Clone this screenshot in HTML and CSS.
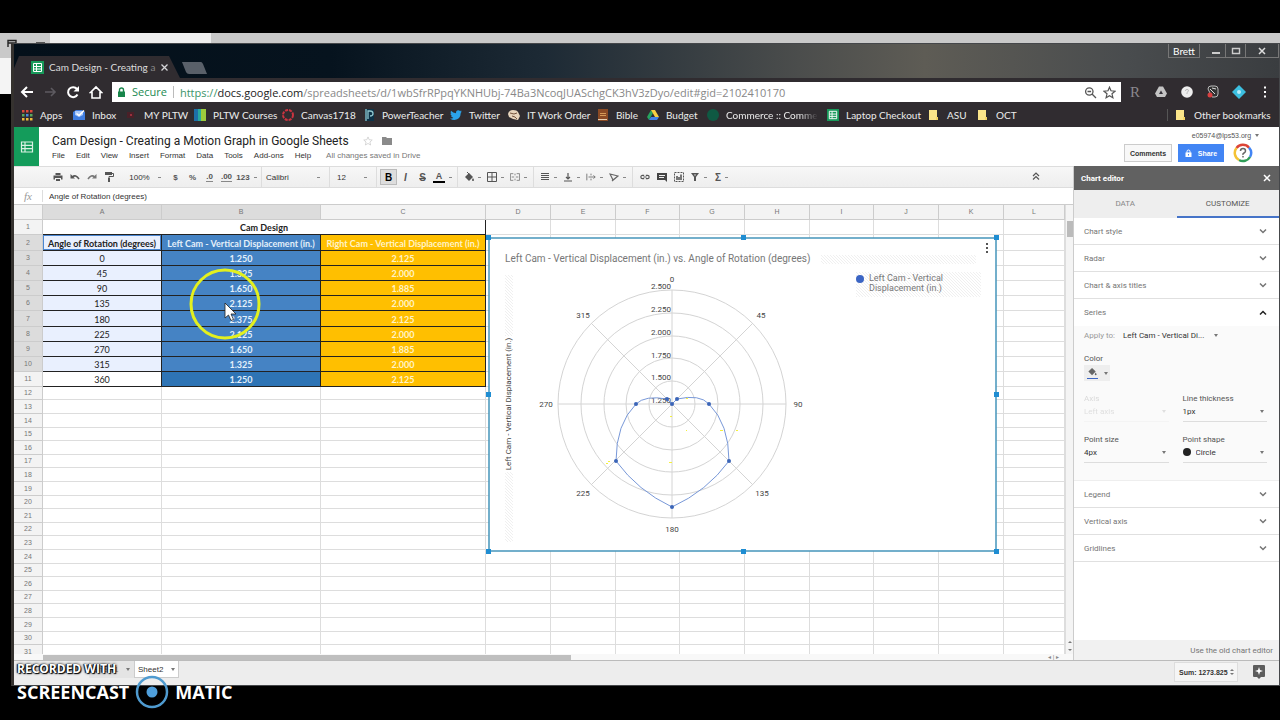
FILE: index.html
```html
<!DOCTYPE html>
<html lang="en">
<head>
<meta charset="utf-8">
<title>Cam Design - Creating a Motion Graph in Google Sheets</title>
<link rel="stylesheet" href="styles.css">
</head>
<body>
<svg class="defs" width="0" height="0" aria-hidden="true">
  <symbol id="sheet" viewBox="0 0 13 13"><path fill="#17995a" d="M0 0h13v13H0z"/><path fill="none" stroke="#fff" d="M2.5 2.5h8v8h-8zM2.5 5.5h8M2.5 8h8M5.5 2.5v8"/></symbol>
  <symbol id="folder" viewBox="0 0 12 12"><path fill="#fbe58a" d="M1 1h8v10H1z"/><path fill="#f5d564" d="M8 8h2v3H8z"/></symbol>
  <symbol id="chev" viewBox="0 0 8 8"><path fill="none" stroke="currentColor" stroke-width="1.5" d="M1 2.5l3 3 3-3"/></symbol>
</svg>

<div class="desktop">
  <div class="back-window">
    <svg width="50" height="14" viewBox="0 0 50 14"><path fill="none" stroke="#222" stroke-width="1.400" d="M8 7.500h8V15H8zM8 10h8"/><path fill="#555" d="M36 9h9v2h-9z"/></svg>
    <span class="back-tab"></span>
  </div>

  <div class="window">
    <header class="titlebar">
      <div class="tab">
        <svg class="i13"><use href="#sheet"/></svg>
        <span class="tab-title">Cam Design - Creating <span class="dim">a</span></span>
        <button class="bare" aria-label="Close tab"><svg width="9" height="9" viewBox="0 0 9 9"><path stroke="#d5d5d8" stroke-width="1.3" d="M1.5 1.5l6 6m0-6l-6 6"/></svg></button>
      </div>
      <svg class="newtab" width="27" height="13" viewBox="0 0 27 13"><path fill="#596069" d="M2 1h19q1 0 2 2l4 10H9q-2 0-3-2z"/></svg>
      <div class="controls">
        <button class="user">Brett</button>
        <button class="winbtn" aria-label="Minimize"><svg width="10" height="10" viewBox="0 0 10 10"><path fill="#ccc" d="M1 6h8v2H1z"/></svg></button>
        <button class="winbtn" aria-label="Maximize"><svg width="10" height="10" viewBox="0 0 10 10"><path fill="none" stroke="#ccc" stroke-width="1.4" d="M1.5 2.5h7v5h-7z"/></svg></button>
        <button class="winbtn wide" aria-label="Close"><svg width="10" height="10" viewBox="0 0 10 10"><path stroke="#ddd" stroke-width="1.5" d="M2 2l6 6m0-6L2 8"/></svg></button>
      </div>
    </header>

    <nav class="navbar">
      <button class="bare" aria-label="Back"><svg width="14" height="14" viewBox="0 0 14 14"><path fill="none" stroke="#fff" stroke-width="2" d="M13 7H2.500M7 2L2 7l5 5"/></svg></button>
      <button class="bare" aria-label="Forward"><svg width="14" height="14" viewBox="0 0 14 14"><path fill="none" stroke="#5d5a60" stroke-width="1.600" d="M2 7h10M8 3l4 4-4 4"/></svg></button>
      <button class="bare" aria-label="Reload"><svg width="14" height="14" viewBox="0 0 14 14"><path fill="none" stroke="#fff" stroke-width="2" d="M11.500 9.500A5 5 0 1 1 11 4"/><path fill="#fff" d="M13 1v5.500H7.500z"/></svg></button>
      <button class="bare" aria-label="Home"><svg width="14" height="14" viewBox="0 0 14 14"><path fill="none" stroke="#fff" stroke-width="1.600" d="M1.500 7.500L7 2l5.500 5.500H11V13H3V7.500z"/></svg></button>
      <div class="omnibox">
        <svg width="9" height="11" viewBox="0 0 9 11"><path fill="#17854a" d="M1 4.500h7V10H1z"/><path fill="none" stroke="#17854a" stroke-width="1.400" d="M2.500 5V3a2 2 0 0 1 4 0v2"/></svg>
        <span class="secure">Secure</span>
        <span class="url"><span class="scheme">https://</span><span class="host">docs.google.com</span>/spreadsheets/d/1wbSfrRPpqYKNHUbj-74Ba3NcoqJUASchgCK3hV3zDyo/edit#gid=2102410170</span>
        <svg width="13" height="13" viewBox="0 0 13 13"><path fill="none" stroke="#555" stroke-width="1.300" d="M9 5.500a3.700 3.700 0 1 1-7.400 0 3.700 3.700 0 0 1 7.400 0zM8 8l4 4M3.500 5.500h3.600"/></svg>
        <svg width="13" height="13" viewBox="0 0 13 13"><path fill="none" stroke="#555" stroke-width="1.200" d="M6.500 1.200L8 4.800l4 .4-3 2.600.9 3.900-3.400-2-3.400 2L4 7.800 1 5.200l4-.4z"/></svg>
      </div>
      <div class="extensions">
        <span class="ext-r">R</span>
        <svg width="14" height="14" viewBox="0 0 14 14"><path fill="#c4c4c4" d="M5 1.500h4l4 7-2 3.500H3L1 8.500z"/><path fill="#35323a" d="M7 5.500L9 9H5z"/></svg>
        <svg width="14" height="14" viewBox="0 0 14 14"><circle cx="7" cy="7" r="5.800" fill="#eee"/><path fill="none" stroke="#bbb" d="M5.500 6q0-1.700 1.500-1.700T8.500 6Q8 6.800 7 7.500V9"/></svg>
        <svg width="14" height="14" viewBox="0 0 14 14"><path fill="#333" stroke="#bbb" d="M2 4q0-3 3-3h4q3 0 3 3v5q0 3-3 3H6z"/><path stroke="#ddd" d="M4 4l5 5M6 3l4 1"/><circle cx="4" cy="10" r="2.500" fill="#d94040"/></svg>
        <svg width="14" height="14" viewBox="0 0 14 14"><path fill="#3cbfe0" d="M7 0l7 7-7 7-7-7z"/><circle cx="7" cy="7" r="2" fill="#b9edf8"/></svg>
        <svg width="14" height="14" viewBox="0 0 14 14"><path fill="#fff" d="M6 1.500h2v2H6zm0 4.500h2v2H6zm0 4.500h2v2H6z"/></svg>
      </div>
    </nav>

    <nav class="bookmarks">
      <a href="#"><svg class="i12" viewBox="0 0 12 12"><path fill="#e04a3c" d="M1 1h2.500v2.500H1zm4 0h2.500v2.500H5zm4 0h2.500v2.500H9z"/><path fill="#58a85f" d="M1 5h2.500v2.500H1zM9 5h2.500v2.500H9z"/><path fill="#4a88e0" d="M5 5h2.500v2.500H5z"/><path fill="#edbb3c" d="M1 9h2.500v2.500H1zm4 0h2.500v2.500H5zm4 0h2.500v2.500H9z"/></svg>Apps</a>
      <a href="#"><svg class="i12" viewBox="0 0 12 12"><path fill="#3f7de0" d="M0 3l3-2h6l3 2v8H0z"/><path fill="#a8c8fa" d="M2 2h8v4L6 8 2 6z"/><path fill="none" stroke="#fff" stroke-width="1.500" d="M3.500 4.500L6 6.500l5-5"/></svg>Inbox</a>
      <a href="#"><svg class="i12" viewBox="0 0 12 12"><path fill="#4a2028" d="M2 3h7v6H2z"/><path fill="#98303c" d="M5 5h2v2H5z"/></svg>MY PLTW</a>
      <a href="#"><svg class="i12" viewBox="0 0 12 12"><path fill="#1d6fa8" d="M0 0h4v12H0z"/><path fill="#28a8a0" d="M4 0h3v12H4z"/><path fill="#9ccb3c" d="M7 0h5v12H7z"/></svg>PLTW Courses</a>
      <a href="#"><svg class="i12" viewBox="0 0 12 12"><circle cx="6" cy="6" r="5" fill="none" stroke="#cc3440" stroke-width="2" stroke-dasharray="3 1"/></svg>Canvas1718</a>
      <a href="#"><svg class="i12" viewBox="0 0 12 12"><path fill="#0d3348" d="M2 0h9v12H2z"/><path fill="none" stroke="#8fc5cc" stroke-width="1.300" d="M3 0v12M5 10V2h2q3 0 3 2.500T7 7"/></svg>PowerTeacher</a>
      <a href="#"><svg class="i12" viewBox="0 0 12 12"><path fill="#2ba3ea" d="M0 9.500q2 .3 3.300-.8Q1.500 8.300 1 7h1Q.5 6.300.4 4.500l1 .3Q0 3.500 1 1.700 3 4 6 4.200 5.800 1.300 8.300 1.200q1 0 1.700.8l1.500-.6-.9 1.400L12 2.500l-1.200 1.300Q10.500 10.500 4.500 11 2 11 0 9.500z"/></svg>Twitter</a>
      <a href="#"><svg class="i12" viewBox="0 0 12 12"><path fill="#e8d5bd" d="M0 5q1-4 5-4t5 2l2 4-2 4-5-1-4-2z"/><path fill="none" stroke="#76543e" d="M2 4l4 1 3-1M4 7l3 1 2 2"/></svg>IT Work Order</a>
      <a href="#"><svg class="i12" viewBox="0 0 12 12"><path fill="#8b4a24" d="M1 0h10v12H1z"/><path fill="#e6cfb0" d="M1 10h9v1H1z"/><path stroke="#d49a58" d="M3 4.500h6M3 6.500h6"/></svg>Bible</a>
      <a href="#"><svg class="i12" viewBox="0 0 12 12"><path fill="#27a35e" d="M4 1L0 8l2 3 4-7z"/><path fill="#f7cf43" d="M4 1h4l4 7H8z"/><path fill="#4080e8" d="M4 8h8l-2 3H2z"/></svg>Budget</a>
      <a href="#"><svg class="i12" viewBox="0 0 12 12"><circle cx="6" cy="6" r="6" fill="#0f5943"/></svg><span class="fade">Commerce :: Comme</span></a>
      <a href="#"><svg class="i12"><use href="#sheet"/></svg>Laptop Checkout</a>
      <a href="#"><svg class="i12"><use href="#folder"/></svg>ASU</a>
      <a href="#"><svg class="i12"><use href="#folder"/></svg>OCT</a>
      <a href="#" class="other"><svg class="i12"><use href="#folder"/></svg>Other bookmarks</a>
    </nav>

    <div class="doc-header">
      <a class="home" href="#" aria-label="Sheets home"><svg width="14" height="14" viewBox="0 0 14 14"><path fill="none" stroke="#d8f0e2" stroke-width="1.200" d="M1.500 2h11v10h-11zM1.500 5.300h11M1.500 8.600h11M5 2v10"/></svg></a>
      <div class="doc-info">
        <div class="doc-title">
          <h1>Cam Design - Creating a Motion Graph in Google Sheets</h1>
          <svg width="10" height="10" viewBox="0 0 13 13"><path fill="none" stroke="#ccc" d="M6.500 1.200L8 4.800l4 .4-3 2.600.9 3.900-3.400-2-3.400 2L4 7.800 1 5.200l4-.4z"/></svg>
          <svg width="12" height="10" viewBox="0 0 12 10"><path fill="#8a8a8a" d="M1 1h4l1 1h5v7H1z"/></svg>
        </div>
        <div class="menus">
          <button>File</button><button>Edit</button><button>View</button><button>Insert</button><button>Format</button><button>Data</button><button>Tools</button><button>Add-ons</button><button>Help</button><span>All changes saved in Drive</span>
        </div>
      </div>
      <div class="account">
        <div class="email">e05974@lps53.org <i class="caret"></i></div>
        <div class="actions">
          <button class="comments">Comments</button>
          <button class="share"><svg width="7" height="9" viewBox="0 0 7 9"><path fill="#fff" d="M.5 3.500h6V8h-6z"/><path fill="none" stroke="#fff" d="M2 4V2.500a1.500 1.500 0 0 1 3 0V4"/><path fill="#4285f4" d="M3 5h1v1.500H3z"/></svg>Share</button>
          <button class="bare help" aria-label="Help"><svg width="20" height="20" viewBox="0 0 20 20"><g fill="none" stroke-width="2.500"><path stroke="#dc4437" d="M3.500 5A8 8 0 0 1 16 4.700"/><path stroke="#4285f4" d="M16 4.700A8 8 0 0 1 17 14"/><path stroke="#2f9e58" d="M17 14a8 8 0 0 1-11 3"/><path stroke="#f4c234" d="M6 17A8 8 0 0 1 3.500 5"/></g><path fill="none" stroke="#666" stroke-width="1.500" d="M7.500 8q0-2.500 2.500-2.500T12.500 8q0 1.200-1.500 2t-1 2M10 13v1.500"/></svg></button>
        </div>
      </div>
    </div>

    <div class="workspace">
      <main class="left">
        <div class="toolbar" role="toolbar">
          <div class="group lead">
            <button aria-label="Print"><svg viewBox="0 0 10 10"><path fill="#555" d="M2.500 1h5v2h-5zM.5 3.500h9v4H8V6H2v1.500H.5zM3 7h4v2H3z"/></svg></button>
            <button aria-label="Undo"><svg viewBox="0 0 10 10"><path fill="none" stroke="#555" stroke-width="1.500" d="M2 5q4-3 7 2"/><path fill="#555" d="M.5 2v4.500H5z"/></svg></button>
            <button aria-label="Redo"><svg viewBox="0 0 10 10"><path fill="none" stroke="#777" stroke-width="1.500" d="M8 5Q4 2 1 7"/><path fill="#777" d="M9.500 2v4.500H5z"/></svg></button>
            <button aria-label="Paint format"><svg viewBox="0 0 10 10"><path fill="#555" d="M1 0h7v3H1z"/><path fill="none" stroke="#555" d="M8 1.500h1.500v3H5V6"/><path fill="#555" d="M4 6h2v4H4z"/></svg></button>
          </div>
          <div class="group">
            <button class="zoom">100%<i class="dash"></i></button>
            <button>$</button><button>%</button>
            <button aria-label="Decrease decimals"><span class="dec">.0</span></button><button aria-label="Increase decimals"><span class="dec">.00</span></button><button class="drop">123<i class="dash"></i></button>
          </div>
          <div class="group"><button class="font">Calibri<i class="dash"></i></button></div>
          <div class="group"><button class="size">12<i class="dash"></i></button></div>
          <div class="group">
            <button class="on"><b>B</b></button><button><em>I</em></button><button><s>S</s></button><button class="drop"><u>A</u><i class="dash"></i></button>
          </div>
          <div class="group">
            <button class="drop" aria-label="Fill color"><svg viewBox="0 0 10 10"><path fill="#555" d="M1 5l4-4 4 4-4 4zM9 6q2 3 0 3t0-3z"/><path stroke="#555" d="M3 0l3 3"/></svg><i class="dash"></i></button>
            <button class="drop" aria-label="Borders"><svg viewBox="0 0 10 10"><path fill="none" stroke="#555" d="M.5.5h9v9h-9zM5 .500v9M.5 5h9"/></svg><i class="dash"></i></button>
            <button class="drop" aria-label="Merge"><svg viewBox="0 0 12 10"><path fill="none" stroke="#777" d="M4 1H.500v8H4M8 1h3.500v8H8M2 5h3M10 5H7M6 1v2m0 4v2"/></svg><i class="dash"></i></button>
          </div>
          <div class="group">
            <button class="drop" aria-label="Align"><svg viewBox="0 0 10 10"><path stroke="#555" d="M1 1.500h8M1 3.500h8M1 5.500h8M1 7.500h8"/></svg><i class="dash"></i></button>
            <button class="drop" aria-label="Vertical align"><svg viewBox="0 0 10 10"><path fill="none" stroke="#555" stroke-width="1.200" d="M1 9h8M5 1v6M3 5l2 2 2-2"/></svg><i class="dash"></i></button>
            <button class="drop" aria-label="Wrap"><svg viewBox="0 0 12 10"><path fill="none" stroke="#666" d="M1 1v8M3 5h8M9 3l2 2-2 2M6 1v2m0 4v2"/></svg><i class="dash"></i></button>
            <button class="drop" aria-label="Rotate"><svg viewBox="0 0 10 10"><path fill="none" stroke="#666" stroke-width="1.200" d="M1 2l8 2-5 4zM3 9l6-5"/></svg><i class="dash"></i></button>
          </div>
          <div class="group last">
            <button aria-label="Link"><svg viewBox="0 0 12 10"><path fill="none" stroke="#555" stroke-width="1.400" d="M5 3H3a2 2 0 0 0 0 4h2M7 3h2a2 2 0 0 1 0 4H7M4 5h4"/></svg></button>
            <button aria-label="Comment"><svg viewBox="0 0 10 10"><path fill="#444" d="M0 1h10v9L8 8H0z"/><path stroke="#eee" d="M2 3.500h6M2 5.500h5"/></svg></button>
            <button aria-label="Chart"><svg viewBox="0 0 10 10"><path fill="none" stroke="#555" stroke-dasharray="2 1" d="M.5.5h9v9h-9z"/><path stroke="#444" stroke-width="1.400" d="M3 8V4m2 4V5m2 3V2.500"/></svg></button>
            <button class="drop" aria-label="Filter"><svg viewBox="0 0 10 10"><path fill="#555" d="M1 1h8L6 5v4H4V5z"/><path fill="#eee" d="M4 2.500h2L5 4z"/></svg><i class="dash"></i></button>
            <button class="drop"><b>Σ</b><i class="dash"></i></button>
          </div>
          <button class="collapse" aria-label="Collapse"><svg viewBox="0 0 10 10"><path fill="none" stroke="#555" stroke-width="1.200" d="M2 5l3-3 3 3M2 8.500l3-3 3 3"/></svg></button>
        </div>
        <label class="formula"><span class="fx">fx</span><input type="text" value="Angle of Rotation (degrees)" aria-label="Formula"></label>
        <div class="grid-area">
          <div class="grid-view">
            <table class="sheet">
              <colgroup><col class="c-num"><col class="c-a"><col class="c-b"><col class="c-c"><col class="c-n"><col class="c-n"><col class="c-s"><col class="c-n"><col class="c-n"><col class="c-s"><col class="c-n"><col class="c-n"><col></colgroup>
              <thead><tr></tr></thead>
              <tbody></tbody>
            </table>
            <svg class="chart" width="513" height="319" viewBox="-3 -3 513 319" role="img" aria-label="Radar chart">
              <defs><pattern id="hatch" width="3" height="3" patternUnits="userSpaceOnUse"><path stroke="#e6e6e6" stroke-width=".6" d="M0 0l3 3"/></pattern></defs>
              <rect class="frame" x="0" y="0" width="507" height="313"/>
              <path fill="url(#hatch)" d="M16 37h8v61h-8zM16 234h8v70h-8zM332 17h155v9H332zM367 34h125v25H367z"/>
              <text class="title" x="16" y="24">Left Cam - Vertical Displacement (in.) vs. Angle of Rotation (degrees)</text>
              <g class="rings"><circle cx="183" cy="166" r="23"/><circle cx="183" cy="166" r="46"/><circle cx="183" cy="166" r="68"/><circle cx="183" cy="166" r="91"/><circle cx="183" cy="166" r="114"/><path d="M183 52v228M69 166h228M102 85l162 162M264 85L102 247"/></g>
              <g class="labels mid"><text x="183" y="44">0</text><text x="272" y="80">45</text><text x="309" y="169">90</text><text x="273" y="258">135</text><text x="183" y="294">180</text><text x="94" y="258">225</text><text x="57" y="169">270</text><text x="94" y="80">315</text></g>
              <g class="labels end"><text x="182" y="51">2.500</text><text x="182" y="74">2.250</text><text x="182" y="97">2.000</text><text x="182" y="120">1.750</text><text x="182" y="142">1.500</text><text x="182" y="165">1.250</text></g>
              <path class="series" d="M183 166L188 161Q211 156 220 166Q240 186 240 223Q218 253 183 269Q149 253 127 223Q127 186 147 166Q156 157 178 161Z"/>
              <g class="dots"><circle cx="183" cy="166" r="2"/><circle cx="188" cy="161" r="2"/><circle cx="220" cy="166" r="2"/><circle cx="240" cy="223" r="2"/><circle cx="183" cy="269" r="2"/><circle cx="127" cy="223" r="2"/><circle cx="147" cy="166" r="2"/><circle cx="178" cy="161" r="2"/></g>
              <path fill="#f4f03c" d="M197 160h2v1h-2zM181 178h2v1h-2zM197 192h1v1h-1zM231 192h3v1h-3zM247 192h2v1h-2zM180 224h3v1h-3zM117 225h2v1h-2zM119 223h2v1h-2z"/>
              <text class="axis" transform="translate(22 166) rotate(-90)">Left Cam - Vertical Displacement (in.)</text>
              <circle cx="371" cy="41" r="4" fill="#3b65c4"/>
              <g class="legend"><text x="380" y="43">Left Cam - Vertical</text><text x="380" y="53">Displacement (in.)</text></g>
              <path fill="#555" d="M497 5h2v2h-2zm0 4h2v2h-2zm0 4h2v2h-2z"/>
              <path class="handles" d="M-3-3h5v5h-5zM252-3h5v5h-5zM505-3h5v5h-5zM-3 154h5v5h-5zM505 154h5v5h-5zM-3 311h5v5h-5zM252 311h5v5h-5zM505 311h5v5h-5z"/>
            </svg>
          </div>
          <div class="vscroll"><span class="vthumb"></span><i class="arr up"></i><i class="arr"></i></div>
        </div>
        <div class="hscroll"><span class="hthumb"></span><span class="harr">◂ | ▸</span></div>
      </main>

      <aside class="editor">
        <div class="ed-head"><h2>Chart editor</h2><button class="bare" aria-label="Close"><svg width="8" height="8" viewBox="0 0 8 8"><path stroke="#fff" stroke-width="1.500" d="M1 1l6 6m0-6L1 7"/></svg></button></div>
        <div class="ed-tabs"><button>DATA</button><button class="active">CUSTOMIZE</button></div>
        <button class="acc">Chart style<svg><use href="#chev"/></svg></button>
        <button class="acc">Radar<svg><use href="#chev"/></svg></button>
        <button class="acc">Chart &amp; axis titles<svg><use href="#chev"/></svg></button>
        <button class="acc open">Series<svg><use href="#chev"/></svg></button>
        <div class="series-body">
          <div class="apply"><label for="apply">Apply to:</label><span class="sel"><select id="apply"><option>Left Cam - Vertical Di...</option></select></span></div>
          <div class="color"><span>Color</span><button class="swatch" aria-label="Series color"><svg width="11" height="12" viewBox="0 0 11 12"><path fill="#666" d="M1 5l4-4 4 4-4 4zM9 6q2 3 0 3t0-3z"/></svg><i class="caret"></i></button></div>
          <div class="fields">
            <div class="field off"><label for="ax">Axis</label><span class="sel"><select id="ax" disabled><option>Left axis</option></select></span></div>
            <div class="field"><label for="lt">Line thickness</label><span class="sel"><select id="lt"><option>1px</option></select></span></div>
            <div class="field"><label for="ps">Point size</label><span class="sel"><select id="ps"><option>4px</option></select></span></div>
            <div class="field"><label for="sh">Point shape</label><span class="sel shape"><select id="sh"><option>Circle</option></select></span></div>
          </div>
        </div>
        <button class="acc">Legend<svg><use href="#chev"/></svg></button>
        <button class="acc">Vertical axis<svg><use href="#chev"/></svg></button>
        <button class="acc">Gridlines<svg><use href="#chev"/></svg></button>
        <div class="ed-foot"><a href="#">Use the old chart editor</a></div>
      </aside>
    </div>

    <footer class="sheetbar">
      <button class="stab">Sheet1<i class="caret"></i></button>
      <button class="stab current">Sheet2<i class="caret"></i></button>
      <button class="sum">Sum: 1273.825 <span class="updown"><i class="arr up"></i><i class="arr"></i></span></button>
      <button class="bare" aria-label="Explore"><svg width="12" height="14" viewBox="0 0 12 14"><path fill="#5c5c5c" d="M1 0h10q1 0 1 1v10q0 1-1 1H8l-2 2-2-2H1q-1 0-1-1V1q0-1 1-1z"/><path fill="#fff" d="M6 2l1 3 3 1-3 1-1 3-1-3-3-1 3-1z"/></svg></button>
    </footer>
  </div>

  <svg class="pointer" width="72" height="72" viewBox="0 0 72 72"><circle cx="36" cy="36" r="34" fill="none" stroke="#e3f01e" stroke-width="3"/><path fill="#fff" stroke="#222" stroke-width=".8" d="M36 35v15l3.500-3 2.500 5.500 2.500-1-2.500-5.500H47z"/></svg>

  <div class="watermark">
    <div class="wm-top">RECORDED WITH</div>
    <div class="wm-main"><span>SCREENCAST</span><svg width="36" height="36" viewBox="0 0 36 36"><circle cx="18" cy="18" r="15" fill="none" stroke="#4f9bd0" stroke-width="2.500"/><circle cx="18" cy="18" r="5.500" fill="#4f9fdc"/></svg><span>MATIC</span></div>
  </div>
</div>
<script src="sheet.js"></script>
</body>
</html>
```
FILE: sheet.js
```js
const columns = "ABCDEFGHIJKL".split("");
const data = [
  ["Angle of Rotation (degrees)", "Left Cam - Vertical Displacement (in.)", "Right Cam - Vertical Displacement (in.)"],
  ["0", "1.250", "2.125"],
  ["45", "1.325", "2.000"],
  ["90", "1.650", "1.885"],
  ["135", "2.125", "2.000"],
  ["180", "2.375", "2.125"],
  ["225", "2.125", "2.000"],
  ["270", "1.650", "1.885"],
  ["315", "1.325", "2.000"],
  ["360", "1.250", "2.125"]
];

const head = document.querySelector(".sheet thead tr");
head.appendChild(document.createElement("th")).className = "corner";
columns.forEach((name, i) => {
  const th = head.appendChild(document.createElement("th"));
  th.textContent = name;
  if (i < 2) th.className = "sel-head";
});

const body = document.querySelector(".sheet tbody");
for (let r = 1; r <= 31; r++) {
  const tr = body.insertRow();
  const th = tr.appendChild(document.createElement("th"));
  th.textContent = r;
  if (r >= 2 && r <= 10) th.className = "sel-head";
  if (r <= 11) tr.classList.add("tall");
  const values = data[r - 2];
  if (values) {
    tr.classList.add("filled");
    if (r === 2) tr.classList.add("heads");
    if (r <= 10) tr.classList.add("picked");
  }
  let start = 0;
  if (r === 1) {
    const td = tr.insertCell();
    td.colSpan = 3;
    td.className = "merged";
    td.textContent = "Cam Design";
    start = 3;
  }
  for (let c = start; c < columns.length; c++) {
    const td = tr.insertCell();
    if (values && c < 3) {
      td.className = "col-" + columns[c].toLowerCase();
      td.textContent = values[c];
    }
  }
}
```
FILE: styles.css
```css
* { box-sizing: border-box; }
body { margin: 0; background: #000; font-family: "Liberation Sans", Arial, sans-serif; font-size: 8px; color: #333; }
button { margin: 0; padding: 0; border: 0; background: none; font: inherit; color: inherit; }
button, a, svg { flex: none; }
a { color: inherit; text-decoration: none; }
h1, h2 { margin: 0; font-weight: normal; }
.bare { display: flex; align-items: center; justify-content: center; }
.defs { position: absolute; }
.i12 { width: 12px; height: 12px; }
.i13 { width: 13px; height: 13px; }
.caret { display: inline-block; border: 2px solid transparent; border-top: 3px solid #777; border-bottom: 0; }
.arr { border: 2px solid transparent; border-top: 2px solid #777; border-bottom: 0; }
.arr.up { border-bottom: 2px solid #777; border-top: 0; }

.desktop { position: relative; height: 100vh; overflow: hidden; }
.back-window { position: absolute; top: 33px; left: 0; right: 0; height: 61px; display: flex; align-items: flex-start; background: linear-gradient(#c9c9c9 25px, #f4f4f4 25px); }
.back-tab { display: block; width: 161px; height: 10px; background: #eee; }
.window { position: absolute; top: 43px; left: 11px; right: 0; bottom: 34px; display: flex; flex-direction: column; background: #302c30; border: 1px solid #45474a; border-left: 3px solid #35322f; overflow: hidden; }

.titlebar { display: flex; height: 34px; flex: none; align-items: flex-end; background: linear-gradient(90deg, #04101a, #06131e 25%, #1d2a35 42%, #4b4d4c 62%, #5e5c55 72%, #494c4e 88%, #3a3d40); }
.tab { display: flex; align-items: center; gap: 5px; width: 166px; height: 22px; padding: 0 8px 0 17px; background: #302c30; clip-path: polygon(5px 0, 155px 0, 100% 100%, -4px 100%); color: #ddd; font: 10px "Lato", sans-serif; }
.tab-title { width: 106px; white-space: nowrap; }
.dim { color: #888; }
.newtab { margin-bottom: 4px; }
.controls { display: flex; align-self: flex-start; margin-left: auto; }
.controls button { display: flex; align-items: center; justify-content: center; height: 14px; border: 1px solid #777; border-top: 0; }
.controls .user { width: 32px; margin-right: 6px; color: #fff; font: 10px "Lato", sans-serif; }
.controls .winbtn { width: 20px; border-left: 0; }
.controls .wide { width: 33px; }

.navbar { display: flex; align-items: center; flex: none; height: 28px; padding: 0 7px 0 6px; gap: 9px; }
.omnibox { display: flex; align-items: center; flex: 1; min-width: 0; height: 20px; padding: 0 5px; gap: 6px; background: #fff; color: #888; font: 11px "Open Sans", sans-serif; white-space: nowrap; }
.omnibox .secure { color: #1a8a52; padding-right: 6px; border-right: 1px solid #bbb; line-height: 12px; }
.url { flex: 1; overflow: hidden; }
.scheme { color: #3b9468; }
.host { color: #222; }
.extensions { display: flex; align-items: center; gap: 12px; }
.ext-r { width: 12px; color: #8b888d; font: 15px "Liberation Serif", serif; }

.bookmarks { display: grid; grid-template-columns: 52px 52px 69px 88px 81px 87px 58px 89px 50px 60px 120px 101px 49px 1fr 112px; align-items: center; flex: none; height: 21px; padding: 0 0 3px 7px; color: #ececec; font: 10px "Lato", sans-serif; white-space: nowrap; }
.bookmarks a { display: flex; align-items: center; gap: 7px; }
.bookmarks .other { padding-left: 7px; border-left: 1px solid #555; }
.fade { width: 92px; mask-image: linear-gradient(90deg, #000 80%, transparent); }

.doc-header { display: flex; flex: none; height: 39px; background: #fff; }
.home { display: flex; width: 25px; align-items: center; justify-content: center; background: #149c5b; }
.doc-info { display: flex; flex-direction: column; gap: 3px; padding: 6px 0 0 13px; flex: 1; }
.doc-title { display: flex; align-items: center; gap: 8px; height: 15px; }
.doc-title h1 { margin-right: 6px; font: 12px Roboto, sans-serif; color: #222; }
.menus { display: flex; gap: 11px; white-space: nowrap; }
.menus span { color: #777; margin-left: 4px; }
.account { display: flex; flex-direction: column; align-items: flex-end; gap: 2px; padding: 4px 20px 0 0; }
.email { color: #555; line-height: 10px; font-size: 7px; }
.email .caret { margin: 0 0 1px 2px; }
.actions { display: flex; align-items: center; gap: 6px; padding-right: 6px; }
.comments { width: 48px; height: 18px; border: 1px solid #ccc; background: #f8f8f8; font-weight: bold; font-size: 7px; }
.share { display: flex; align-items: center; justify-content: center; gap: 6px; width: 46px; height: 18px; background: #4285f4; color: #fff; font-weight: bold; font-size: 7px; }
.help { margin-left: 3px; }

.workspace { display: flex; flex: 1; min-height: 0; background: #fff; }
.left { display: flex; flex-direction: column; flex: 1; min-width: 0; }
.toolbar { display: flex; flex: none; height: 22px; align-items: center; background: linear-gradient(#f7f7f7, #eee); border: 1px solid #ddd; border-width: 1px 0; }
.group { display: flex; height: 20px; align-items: center; border-right: 1px solid #ddd; padding: 0 3px; }
.group.lead { padding-left: 35px; border: 0; }
.group button { display: flex; align-items: center; justify-content: center; gap: 4px; width: 17px; height: 16px; font-weight: bold; color: #555; }
.toolbar svg { width: 10px; height: 10px; }
.group .drop { width: 23px; }
.group .zoom { width: 44px; gap: 8px; font-weight: normal; color: #333; }
.group .font { width: 61px; justify-content: space-between; padding: 0 6px 0 1px; font-weight: normal; color: #333; }
.group .size { width: 40px; justify-content: space-between; padding: 0 6px 0 4px; font-weight: normal; color: #333; }
.dec { border-bottom: 1px solid #888; line-height: 8px; }
.group b, .group em, .group s { font-size: 10px; }
.group u { font-size: 9px; text-decoration: none; border-bottom: 2px solid #000; padding: 0 3px; line-height: 10px; }
.group .on { background: #ddd; border: 1px solid #bbb; color: #000; }
.group.last { border: 0; }
.dash { width: 3px; height: 1px; background: #888; }
.collapse { margin: 0 32px 0 auto; }
.formula { display: flex; align-items: center; flex: none; height: 17px; background: #fff; border-bottom: 1px solid #ccc; }
.fx { width: 29px; padding-left: 10px; color: #999; font: italic 11px "Liberation Serif", serif; border-right: 1px solid #ddd; }
.formula input { flex: 1; border: 0; padding: 0 6px; background: none; font: inherit; color: #333; outline: 0; }

.grid-area { display: flex; flex: 1; min-height: 0; }
.grid-view { position: relative; flex: 1; min-width: 0; overflow: hidden; }
.sheet { width: 100%; table-layout: fixed; border-collapse: separate; border-spacing: 0; line-height: 10px; }
.c-num { width: 29px; } .c-a { width: 119px; } .c-b { width: 159px; } .c-c { width: 165px; } .c-n { width: 65px; } .c-s { width: 64px; }
.sheet th, .sheet td { padding: 0; height: 14px; border: 1px solid #ddd; border-width: 0 1px 1px 0; white-space: nowrap; text-align: center; overflow: hidden; }
.sheet th { background: #f3f3f3; color: #777; font-weight: normal; font-size: 7px; border-color: #ccc; }
.sheet thead th { height: 15px; }
.sheet .sel-head { background: #dcdcdc; }
.sheet tr:nth-child(5n) td, .sheet tr:nth-child(5n+2) td, .sheet tr:nth-child(5n) th, .sheet tr:nth-child(5n+2) th { height: 13px; }
.sheet .tall td, .sheet .tall th, .sheet .tall:nth-child(5n) td, .sheet .tall:nth-child(5n) th, .sheet .tall:nth-child(5n+2) td, .sheet .tall:nth-child(5n+2) th { height: 15px; }
.sheet .tall:nth-child(2) td, .sheet .tall:nth-child(7) td { height: 16px; }
.sheet .tall td { padding-top: 2px; }
.sheet .merged { font: bold 9px/10px "Lato", sans-serif; color: #222; border-color: #222; }
.sheet .col-a, .sheet .col-b, .sheet .col-c { border-color: #222; font: 9px/10px "Lato", sans-serif; color: #222; }
.sheet .col-b { background: #2e74b5; color: #e4f0fa; font-weight: bold; }
.sheet .col-c { background: #ffbf00; color: #fff3c8; font-weight: bold; }
.sheet .picked .col-a { background: #e9f0fe; }
.sheet .picked .col-b { background: #4583c4; }
.sheet .heads td { font-weight: bold; }
.sheet .heads .col-a { box-shadow: inset 0 0 0 1px #4a86d0; }
.chart { position: absolute; left: 472px; top: 30px; }
.frame { fill: #fff; stroke: #4595bb; stroke-width: 1.5; }
.handles { fill: #1f8dd2; }
.chart text { font-family: Roboto, sans-serif; font-size: 8px; fill: #444; }
.chart .title { font-size: 10px; fill: #777; }
.chart .legend text { font-size: 9px; fill: #777; }
.chart .axis, .mid { text-anchor: middle; }
.end { text-anchor: end; }
.rings { fill: none; stroke: #d4d4d4; }
.series { fill: none; stroke: #7898d8; }
.dots { fill: #3b65b8; }
.vscroll { display: flex; flex-direction: column; align-items: center; gap: 6px; width: 8px; padding: 16px 0 3px; background: #f4f4f4; border-left: 1px solid #ddd; }
.vthumb { width: 6px; height: 16px; background: #bbb; margin-bottom: auto; }
.hscroll { display: flex; align-items: center; flex: none; height: 6px; padding: 0 14px 0 29px; background: #f8f8f8; }
.hthumb { width: 52%; height: 5px; background: #bfbfbf; }
.harr { margin-left: auto; color: #888; font-size: 6px; line-height: 6px; }

.editor { display: flex; flex-direction: column; width: 206px; border-left: 1px solid #ccc; background: #fff; font-family: Roboto, sans-serif; color: #757575; }
.ed-head { display: flex; align-items: center; justify-content: space-between; height: 24px; flex: none; padding: 0 8px 0 7px; background: #616161; color: #fff; }
.ed-head h2 { font-size: 8px; font-weight: bold; }
.ed-tabs { display: flex; flex: none; height: 28px; background: #eee; }
.ed-tabs button { flex: 1; border-bottom: 2px solid transparent; color: #888; }
.ed-tabs .active { color: #555; border-color: #4674c8; }
.acc { display: flex; align-items: center; justify-content: space-between; height: 27px; padding: 0 12px 0 10px; border-bottom: 1px solid #e0e0e0; }
.acc svg { width: 8px; height: 8px; }
.acc.open { border: 0; }
.open svg { transform: rotate(180deg); color: #222; }
.series-body { display: flex; flex-direction: column; gap: 13px; height: 155px; padding: 3px 12px 0 10px; background: #fafafa; border-bottom: 1px solid #eee; color: #555; }
.apply { display: flex; align-items: center; gap: 8px; }
.apply label { color: #999; }
.apply .sel { width: 98px; }
.sel { position: relative; display: block; }
.sel::after { content: ""; position: absolute; right: 3px; top: 5px; border: 2px solid transparent; border-top: 3px solid #777; border-bottom: 0; }
select { appearance: none; display: block; width: 100%; height: 12px; margin: 0; padding: 0; border: 0; background: none; font: inherit; color: #333; outline: 0; }
.color { display: flex; flex-direction: column; gap: 2px; }
.swatch { display: flex; align-items: center; gap: 6px; width: 26px; height: 16px; padding-left: 3px; background: #eee; }
.swatch svg { border-bottom: 1px solid #3b65c4; }
.fields { display: grid; grid-template-columns: 1fr 1fr; gap: 13px 14px; }
.field { display: flex; flex-direction: column; gap: 2px; }
.field .sel { height: 17px; border-bottom: 1px solid #ddd; }
.field.off { opacity: .2; }
.shape select { padding-left: 13px; }
.shape::before { content: ""; position: absolute; left: 0; top: 2px; width: 8px; height: 8px; border-radius: 50%; background: #222; }
.ed-foot { display: flex; align-items: center; justify-content: flex-end; height: 20px; margin-top: auto; padding-right: 6px; background: #f1f1f1; }

.sheetbar { display: flex; flex: none; align-items: flex-start; height: 25px; padding: 0 14px 0 75px; background: #ededed; border-top: 1px solid #bbb; }
.stab { display: flex; align-items: center; justify-content: space-between; width: 45px; height: 17px; padding: 0 4px; color: #777; background: #e4e4e4; }
.stab.current { color: #333; background: #fff; border: 1px solid #ccc; border-top: 0; padding: 0 3px; }
.sum { display: flex; align-items: center; justify-content: space-between; width: 64px; height: 20px; margin: 1px 15px 0 auto; padding: 0 3px 0 4px; border: 1px solid #ddd; background: #f5f5f5; font-weight: bold; font-size: 7px; white-space: nowrap; }
.updown { display: flex; flex-direction: column; gap: 2px; }
.sheetbar .bare { margin-top: 4px; }

.pointer { position: absolute; left: 189px; top: 268px; }
.watermark { position: absolute; left: 17px; top: 662px; color: #fff; font-family: "Open Sans", sans-serif; font-weight: bold; text-shadow: 1px 1px 2px #000; }
.wm-top { font-size: 12px; line-height: 14px; text-shadow: 1px 1px 1px #000, -1px 0 1px #000, 0 0 3px #000; }
.wm-main { display: flex; align-items: center; gap: 5px; height: 32px; font-size: 18px; }
```
